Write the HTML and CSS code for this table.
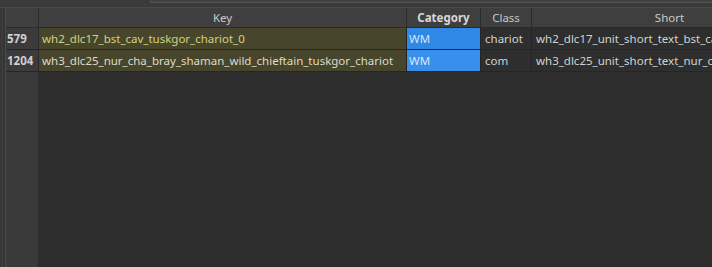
FILE: index.html
```html
<!DOCTYPE html>
<html>
<head>
<meta charset="utf-8">
<link rel="stylesheet" href="styles.css">
</head>
<body>
<div class="top"><div class="tab"></div></div>
<div class="frame">
  <div class="edge"></div>
  <div class="table">
    <div class="head">
      <div class="h corner"></div>
      <div class="h">Key</div>
      <div class="h bold">Category</div>
      <div class="h">Class</div>
      <div class="h">Short</div>
    </div>
    <div class="row">
      <div class="num">579</div>
      <div class="c key k1">wh2_dlc17_bst_cav_tuskgor_chariot_0</div>
      <div class="c cat">WM</div>
      <div class="c">chariot</div>
      <div class="c">wh2_dlc17_unit_short_text_bst_cav_tuskgor_chariot</div>
    </div>
    <div class="row">
      <div class="num">1204</div>
      <div class="c key k2">wh3_dlc25_nur_cha_bray_shaman_wild_chieftain_tuskgor_chariot</div>
      <div class="c cat cat2">WM</div>
      <div class="c">com</div>
      <div class="c">wh3_dlc25_unit_short_text_nur_cha_bray_shaman</div>
    </div>
    <div class="rest">
      <div class="restnum"></div>
      <div class="restbody"></div>
    </div>
  </div>
</div>
</body>
</html>
```
FILE: styles.css
```css
html, body {
  margin: 0;
  height: 100%;
  overflow: hidden;
}
body {
  background: #353535;
  font-family: "Noto Sans", "Open Sans", sans-serif;
  font-size: 11.5px;
  color: #d2d2d2;
  display: flex;
  flex-direction: column;
}
.top {
  height: 7px;
  flex: none;
  background: #3a3a3a;
}
.tab {
  margin-left: 150px;
  height: 2px;
  border-left: 1px solid #555;
  border-bottom: 1px solid #555;
  background: #404040;
}
.frame {
  flex: 1;
  display: flex;
  border-top: 1px solid #4a4a4a;
  min-height: 0;
}
.edge {
  width: 2px;
  flex: none;
  border-left: 2px solid #3c3c3c;
  border-right: 1px solid #4b4b4b;
  margin-left: 1px;
}
.table {
  flex: 1;
  display: flex;
  flex-direction: column;
  overflow: hidden;
  min-width: 0;
}
.head, .row {
  display: grid;
  grid-template-columns: 33px 368px 74px 51px 276px;
  flex: none;
}
.head {
  height: 19px;
  background: #3f3f3f;
  border-bottom: 1px solid #2a2a2a;
}
.h {
  border-right: 1px solid #2c2c2c;
  text-align: center;
  line-height: 19px;
  color: #c9c9c9;
  white-space: nowrap;
  overflow: hidden;
}
.h.corner {
  background: #3f3f3f;
}
.h.bold {
  font-weight: bold;
  color: #d8d8d8;
}
.row {
  height: 21px;
  border-bottom: 1px solid #262626;
}
.num {
  background: #3b3b3b;
  border-right: 1px solid #2a2a2a;
  font-weight: bold;
  color: #d0d0d0;
  line-height: 21px;
  padding-left: 1px;
  white-space: nowrap;
}
.c {
  background: #2e2e2e;
  border-right: 1px solid #252525;
  line-height: 21px;
  padding-left: 4px;
  white-space: nowrap;
  overflow: hidden;
}
.key {
  background: #47462d;
  padding-left: 3px;
}
.k1 {
  color: #d6d27b;
}
.k2 {
  color: #dedbc6;
}
.cat {
  background: #2f87e6;
  color: #d9e6f8;
  padding-left: 2px;
}
.cat2 {
  background: #3990ec;
}
.rest {
  flex: 1;
  display: grid;
  grid-template-columns: 33px 1fr;
}
.restnum {
  background: #3a3a3a;
  border-right: 1px solid #2a2a2a;
}
.restbody {
  background: #2e2e2e;
}
```
